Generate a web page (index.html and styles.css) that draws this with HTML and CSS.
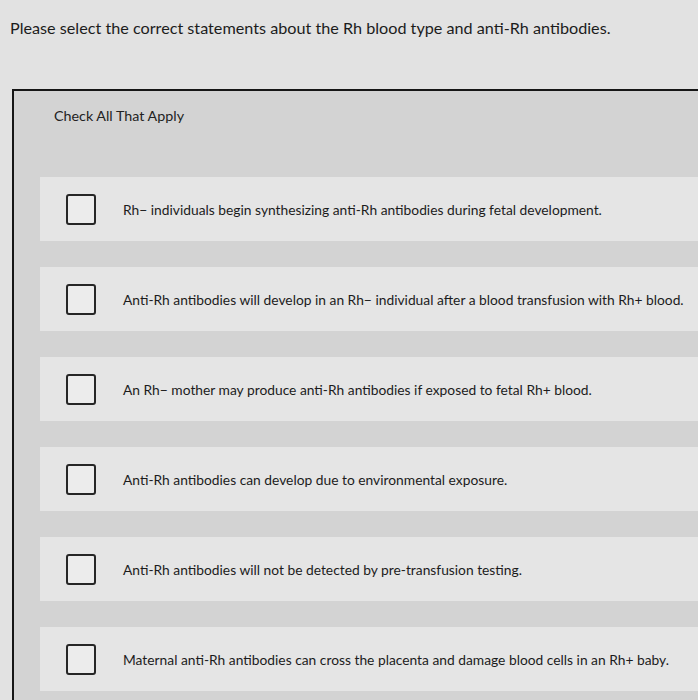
FILE: index.html
```
<!DOCTYPE html>
<html lang="en">
<head>
<meta charset="utf-8">
<title>Rh blood type question</title>
<link rel="stylesheet" href="styles.css">
</head>
<body>
<div class="page">
  <h1 class="question">Please select the correct statements about the Rh blood type and anti-Rh antibodies.</h1>
  <section class="panel">
    <div class="instr">Check All That Apply</div>
    <ul class="options">
      <li class="option"><span class="box"></span><span class="label">Rh− individuals begin synthesizing anti-Rh antibodies during fetal development.</span></li>
      <li class="option"><span class="box"></span><span class="label">Anti-Rh antibodies will develop in an Rh− individual after a blood transfusion with Rh+ blood.</span></li>
      <li class="option"><span class="box"></span><span class="label">An Rh− mother may produce anti-Rh antibodies if exposed to fetal Rh+ blood.</span></li>
      <li class="option"><span class="box"></span><span class="label">Anti-Rh antibodies can develop due to environmental exposure.</span></li>
      <li class="option"><span class="box"></span><span class="label">Anti-Rh antibodies will not be detected by pre-transfusion testing.</span></li>
      <li class="option"><span class="box"></span><span class="label">Maternal anti-Rh antibodies can cross the placenta and damage blood cells in an Rh+ baby.</span></li>
    </ul>
  </section>
</div>
</body>
</html>
```
FILE: styles.css
```
html, body {
  margin: 0;
  padding: 0;
  height: 100%;
  overflow: hidden;
}
body {
  background: #e2e2e2;
  font-family: Lato, "Liberation Sans", sans-serif;
  color: #1a1a1a;
}
.page {
  display: flex;
  flex-direction: column;
  height: 700px;
}
.question {
  margin: 0;
  padding: 18px 0 0 10px;
  height: 89px;
  box-sizing: border-box;
  font-size: 16.2px;
  font-weight: 400;
  color: #1c1c1c;
}
.panel {
  flex: 1;
  margin-left: 12px;
  border-top: 2px solid #161616;
  border-left: 2px solid #161616;
  background: #d3d3d3;
  padding-top: 16px;
}
.instr {
  padding-left: 40px;
  font-size: 14.3px;
  height: 70px;
  color: #222;
}
.options {
  list-style: none;
  margin: 0;
  padding: 0 0 0 26px;
  display: flex;
  flex-direction: column;
  gap: 26px;
}
.option {
  display: flex;
  align-items: center;
  height: 64px;
  background: #e5e5e5;
  padding-left: 26px;
}
.box {
  width: 26px;
  height: 27px;
  border: 2px solid #262626;
  border-radius: 3px;
  background: #ececec;
  flex-shrink: 0;
}
.label {
  margin-left: 27px;
  font-size: 13.8px;
  color: #1c1c1c;
}
```
